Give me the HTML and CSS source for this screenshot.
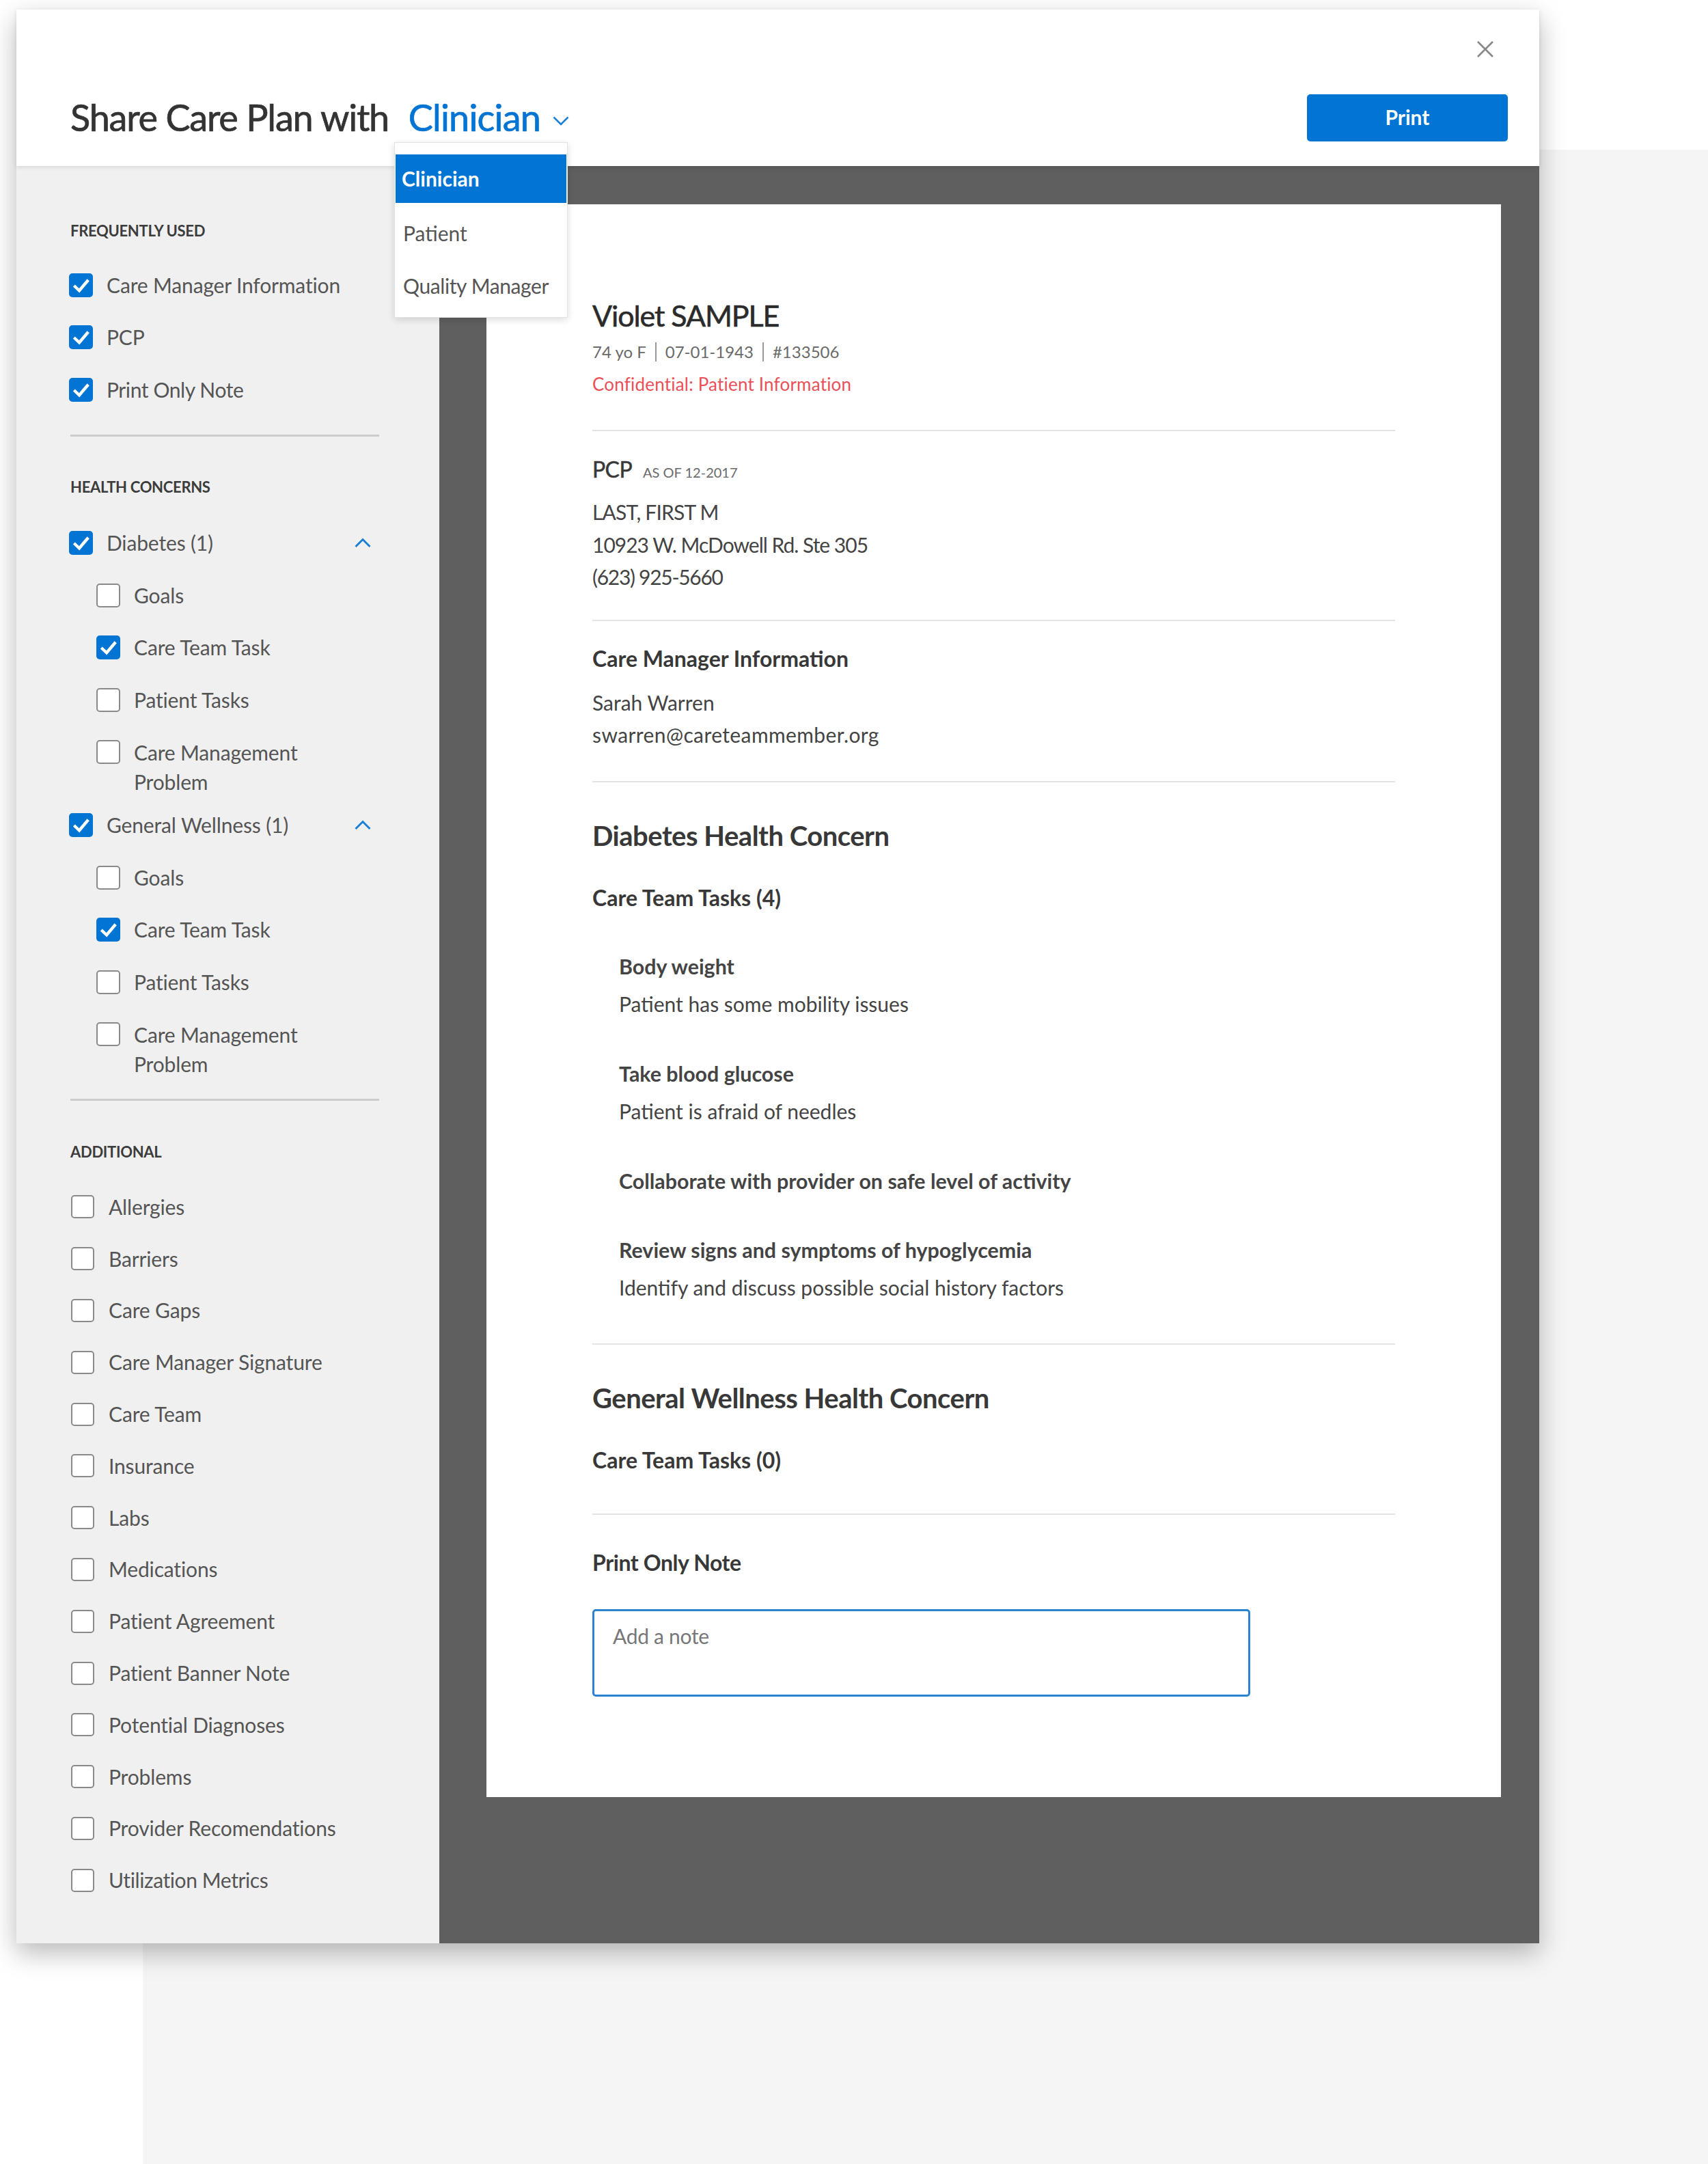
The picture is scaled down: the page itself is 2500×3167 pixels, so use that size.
FILE: index.html
```html
<!DOCTYPE html>
<html lang="en">
<head>
  <meta charset="UTF-8" />
  <title>Share Care Plan</title>
  <link rel="stylesheet" href="styles.css">
</head>
<body>
  <svg class="sprite" width="0" height="0" aria-hidden="true">
    <symbol id="tick" viewBox="0 0 36 36">
      <path d="M7.5 18.5l8 7.5L29 10" fill="none" stroke="#fff" stroke-width="4.5"/>
    </symbol>
    <symbol id="up" viewBox="0 0 24 15">
      <path d="M1.5 13L12 2.5 22.5 13" fill="none" stroke="#1a80d6" stroke-width="3"/>
    </symbol>
  </svg>

  <div class="backdrop"></div>

  <div class="modal">
    <header class="modal-head">
      <div class="close-row">
        <svg class="close" viewBox="0 0 24 24"><path d="M1 1l22 22M23 1L1 23" fill="none" stroke="#888" stroke-width="2.6"/></svg>
      </div>
      <div class="title-row">
        <h1 class="title">Share Care Plan with <span class="title-pick">Clinician</span>
          <svg class="title-caret" viewBox="0 0 24 14"><path d="M1.5 1.5L12 12 22.5 1.5" fill="none" stroke="#1a80d6" stroke-width="2.6"/></svg>
        </h1>
        <button class="print">Print</button>
      </div>
      <ul class="menu">
        <li class="menu-item active">Clinician</li>
        <li class="menu-item patient">Patient</li>
        <li class="menu-item quality">Quality Manager</li>
      </ul>
    </header>

    <div class="modal-body">
      <aside class="sidebar">
        <h4 class="side-head">Frequently Used</h4>
        <div class="opt"><span class="box on"><svg><use href="#tick"/></svg></span><span>Care Manager Information</span></div>
        <div class="opt"><span class="box on"><svg><use href="#tick"/></svg></span><span>PCP</span></div>
        <div class="opt"><span class="box on"><svg><use href="#tick"/></svg></span><span class="tighter">Print Only Note</span></div>
        <div class="rule"></div>

        <h4 class="side-head">Health Concerns</h4>
        <div class="opt"><span class="box on"><svg><use href="#tick"/></svg></span><span>Diabetes (1)</span><svg class="up"><use href="#up"/></svg></div>
        <div class="opt sub"><span class="box"></span><span>Goals</span></div>
        <div class="opt sub"><span class="box on"><svg><use href="#tick"/></svg></span><span>Care Team Task</span></div>
        <div class="opt sub"><span class="box"></span><span>Patient Tasks</span></div>
        <div class="opt sub tall"><span class="box"></span><span>Care Management<br>Problem</span></div>
        <div class="opt"><span class="box on"><svg><use href="#tick"/></svg></span><span>General Wellness (1)</span><svg class="up"><use href="#up"/></svg></div>
        <div class="opt sub"><span class="box"></span><span>Goals</span></div>
        <div class="opt sub"><span class="box on"><svg><use href="#tick"/></svg></span><span>Care Team Task</span></div>
        <div class="opt sub"><span class="box"></span><span>Patient Tasks</span></div>
        <div class="opt sub tall"><span class="box"></span><span>Care Management<br>Problem</span></div>
        <div class="rule rule-tight"></div>

        <h4 class="side-head head-extra">Additional</h4>
        <div class="opt extra"><span class="box"></span><span>Allergies</span></div>
        <div class="opt extra"><span class="box"></span><span>Barriers</span></div>
        <div class="opt extra"><span class="box"></span><span>Care Gaps</span></div>
        <div class="opt extra"><span class="box"></span><span>Care Manager Signature</span></div>
        <div class="opt extra"><span class="box"></span><span>Care Team</span></div>
        <div class="opt extra"><span class="box"></span><span>Insurance</span></div>
        <div class="opt extra"><span class="box"></span><span>Labs</span></div>
        <div class="opt extra"><span class="box"></span><span>Medications</span></div>
        <div class="opt extra"><span class="box"></span><span>Patient Agreement</span></div>
        <div class="opt extra"><span class="box"></span><span>Patient Banner Note</span></div>
        <div class="opt extra"><span class="box"></span><span>Potential Diagnoses</span></div>
        <div class="opt extra"><span class="box"></span><span>Problems</span></div>
        <div class="opt extra"><span class="box"></span><span>Provider Recomendations</span></div>
        <div class="opt extra"><span class="box"></span><span class="tighter">Utilization Metrics</span></div>
      </aside>

      <main class="preview">
        <article class="paper">
          <h2 class="name">Violet SAMPLE</h2>
          <p class="meta">74 yo F <i class="bar"></i> 07-01-1943 <i class="bar"></i> #133506</p>
          <p class="confidential">Confidential: Patient Information</p>
          <hr class="line line-a">

          <h3 class="block-head pcp">PCP <small class="as-of">AS OF 12-2017</small></h3>
          <p class="text text-pcp tight-name">LAST, FIRST M</p>
          <p class="text tight-addr">10923 W. McDowell Rd. Ste 305</p>
          <p class="text tight-phone">(623) 925-5660</p>
          <hr class="line line-b">

          <h3 class="block-head">Care Manager Information</h3>
          <p class="text text-first">Sarah Warren</p>
          <p class="text wide-mail">swarren@careteammember.org</p>
          <hr class="line line-c">

          <h2 class="concern">Diabetes Health Concern</h2>
          <h3 class="block-head tasks-head">Care Team Tasks (4)</h3>
          <div class="tasks">
            <div class="task"><h5>Body weight</h5><p>Patient has some mobility issues</p></div>
            <div class="task"><h5>Take blood glucose</h5><p>Patient is afraid of needles</p></div>
            <div class="task task-solo"><h5>Collaborate with provider on safe level of activity</h5></div>
            <div class="task"><h5>Review signs and symptoms of hypoglycemia</h5><p>Identify and discuss possible social history factors</p></div>
          </div>
          <hr class="line line-d">

          <h2 class="concern concern-two">General Wellness Health Concern</h2>
          <h3 class="block-head tasks-head">Care Team Tasks (0)</h3>
          <hr class="line line-e">

          <h3 class="block-head note-head">Print Only Note</h3>
          <div class="note">Add a note</div>
        </article>
      </main>
    </div>
  </div>
</body>
</html>
```

FILE: styles.css
```css
:root {
  --blue: #0274d4;
  --ink: #333333;
  --soft: #555555;
}
* {
  box-sizing: border-box;
}
body {
  margin: 0;
  height: 3167px;
  background: #ffffff;
  color: var(--ink);
  font-family: Lato, "Noto Sans", sans-serif;
  position: relative;
  overflow: hidden;
}
.sprite {
  position: absolute;
}
.backdrop {
  position: absolute;
  left: 209px;
  right: 0;
  top: 219px;
  bottom: 0;
  background: #f5f5f5;
}
.modal {
  position: relative;
  margin: 14px 0 0 24px;
  width: 2229px;
  box-shadow: 0 14px 36px rgba(0, 0, 0, 0.28);
}

/* header */
.modal-head {
  position: relative;
  z-index: 2;
  height: 229px;
  padding: 46px 46px 36px 79px;
  background: #ffffff;
  display: flex;
  flex-direction: column;
  box-shadow: 0 2px 6px rgba(0, 0, 0, 0.1);
}
.close-row {
  display: flex;
  justify-content: flex-end;
  padding-right: 21px;
}
.close {
  width: 24px;
  height: 24px;
}
.title-row {
  margin-top: auto;
  display: flex;
  align-items: center;
  justify-content: space-between;
}
.title {
  margin: 0;
  font-size: 54px;
  font-weight: 400;
  letter-spacing: -1.2px;
  line-height: 70px;
  display: flex;
  align-items: center;
  white-space: pre;
  -webkit-text-stroke: 0.7px currentColor;
}
.title-pick {
  color: var(--blue);
  margin-left: 16px;
  letter-spacing: -0.8px;
}
.title-caret {
  width: 24px;
  height: 14px;
  margin: 10px 0 0 18px;
}
.print {
  width: 294px;
  height: 69px;
  padding: 0 0 2px;
  border: none;
  border-radius: 5px;
  background: var(--blue);
  color: #ffffff;
  font: 700 30px Lato, sans-serif;
}
.menu {
  position: absolute;
  left: 553px;
  top: 194px;
  width: 254px;
  height: 257px;
  margin: 0;
  padding: 17px 1px 0;
  list-style: none;
  background: #ffffff;
  border: 1px solid #e2e2e2;
  box-shadow: 0 3px 10px rgba(0, 0, 0, 0.14);
  font-size: 30px;
  color: var(--soft);
}
.menu-item {
  padding-left: 11px;
  height: 71px;
  line-height: 71px;
}
.menu-item.active {
  padding-left: 9px;
  background: var(--blue);
  color: #ffffff;
  font-weight: 700;
}
.menu-item.patient {
  margin-top: 9px;
}
.menu-item.quality {
  margin-top: 6px;
  white-space: nowrap;
  letter-spacing: -0.4px;
}

/* layout */
.modal-body {
  display: flex;
  height: 2601px;
}
.sidebar {
  width: 619px;
  padding: 80px 88px 0 79px;
  background: #f0f0f0;
  color: var(--soft);
  font-size: 30px;
  letter-spacing: -0.15px;
}
.tighter {
  letter-spacing: -0.4px;
}
.side-head {
  margin: 0 0 26px;
  font-size: 22px;
  line-height: 30px;
  font-weight: 700;
  letter-spacing: -0.3px;
  text-transform: uppercase;
  color: #3c3c3c;
}
.rule + .side-head {
  margin-bottom: 29px;
}
.rule + .head-extra {
  margin-bottom: 28px;
}
.head-extra {
  padding-top: 1px;
}
.opt {
  display: flex;
  align-items: center;
  gap: 20px;
  height: 76.5px;
  margin-left: -2px;
  line-height: 43px;
  white-space: nowrap;
}
.opt .up {
  width: 24px;
  height: 15px;
  margin-left: auto;
  margin-right: 12px;
}
.opt.sub {
  margin-left: 38px;
}
.opt.tall {
  align-items: flex-start;
  height: 107px;
  padding-top: 17px;
}
.opt.tall .box {
  margin-top: 3px;
}
.opt.extra {
  height: 75.8px;
  margin-left: 1px;
  gap: 21px;
}
.opt.extra .box {
  width: 34px;
  height: 34px;
}
.box {
  flex: none;
  width: 35px;
  height: 35px;
  background: #ffffff;
  border: 2px solid #8a8a8a;
  border-radius: 5px;
  overflow: hidden;
}
.box.on {
  background: var(--blue);
  border: none;
}
.box svg {
  display: block;
  width: 35px;
  height: 35px;
}
.rule {
  height: 3px;
  margin: 27px 0 59px;
  background: #cccccc;
}
.rule-tight {
  margin-top: 25px;
}

/* document preview */
.preview {
  flex: 1;
  padding: 56px 56px 0 69px;
  background: #5f5f5f;
}
.paper {
  height: 2331px;
  padding: 133px 155px 0;
  background: #ffffff;
  font-size: 30px;
  color: #444444;
}
.paper h2, .paper h3, .paper h5, .paper p, .paper hr {
  margin: 0;
}
.name {
  font-size: 43px;
  font-weight: 400;
  line-height: 60px;
  letter-spacing: -1.1px;
  color: #2b2b2b;
  -webkit-text-stroke: 0.6px currentColor;
}
.meta {
  margin-top: 5px !important;
  font-size: 24px;
  line-height: 36px;
  color: #6a6a6a;
  display: flex;
  align-items: center;
  gap: 13px;
}
.bar {
  width: 2px;
  height: 28px;
  background: #999999;
}
.confidential {
  margin-top: 11px !important;
  font-size: 26px;
  line-height: 36px;
  letter-spacing: 0.2px;
  color: #ea4f58;
}
.line {
  height: 2px;
  border: none;
  background: #e4e4e4;
}
.line-a { margin-top: 49px !important; }
.line-b { margin-top: 38px !important; }
.line-c { margin-top: 43px !important; }
.line-d { margin-top: 54px !important; }
.line-e { margin-top: 58px !important; }
.block-head {
  margin-top: 35px !important;
  font-size: 32px;
  font-weight: 700;
  line-height: 40px;
  color: #383838;
}
.block-head.pcp {
  margin-top: 36px !important;
  display: flex;
  align-items: baseline;
  gap: 16px;
  font-weight: 400;
  font-size: 32px;
  letter-spacing: -0.6px;
  -webkit-text-stroke: 0.5px currentColor;
}
.as-of {
  font-size: 20px;
  letter-spacing: 0;
  color: #6a6a6a;
  -webkit-text-stroke: 0;
}
.text {
  line-height: 47.5px;
}
.text-first {
  margin-top: 21px !important;
}
.text-pcp {
  margin-top: 15px !important;
}
.tight-name {
  letter-spacing: -0.8px;
}
.tight-addr {
  letter-spacing: -1px;
}
.tight-phone {
  letter-spacing: -1.3px;
}
.wide-mail {
  letter-spacing: 0.4px;
}
.concern {
  margin-top: 48px !important;
  font-size: 40px;
  font-weight: 700;
  line-height: 60px;
  letter-spacing: -0.5px;
  color: #383838;
}
.concern-two {
  margin-top: 48px !important;
}
.tasks-head {
  margin-top: 41px !important;
}
.note-head {
  margin-top: 50px !important;
  letter-spacing: -0.4px;
}
.tasks {
  padding: 53px 0 0 39px;
}
.task {
  margin-bottom: 47px;
  line-height: 55px;
}
.task h5 {
  font-size: 30.4px;
  font-weight: 700;
}
.task-solo {
  margin-top: 2px;
  margin-bottom: 46px;
}
.task:last-child {
  margin-bottom: 0;
}
.note {
  width: 963px;
  height: 128px;
  margin-top: 48px;
  padding: 18px 27px;
  border: 3px solid #2a84d2;
  border-radius: 5px;
  color: #777777;
  font-size: 30px;
  letter-spacing: -0.3px;
  line-height: 36px;
}
```
